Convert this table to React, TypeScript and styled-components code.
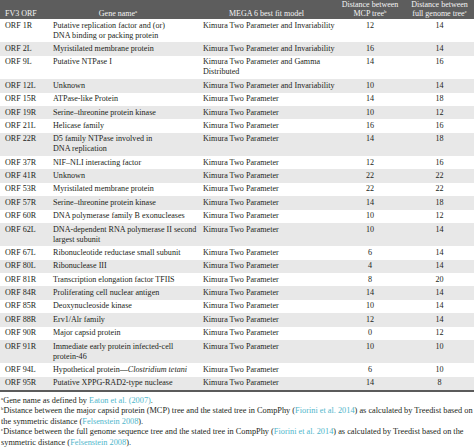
import React from "react";
import styled, { createGlobalStyle } from "styled-components";

const GlobalStyle = createGlobalStyle`
  html, body {
    margin: 0;
    padding: 0;
    background: #ffffff;
  }
  body {
    font-family: "Liberation Serif", "Times New Roman", serif;
  }
`;

const Page = styled.div`
  width: 474px;
  overflow: hidden;
  font-family: "Liberation Serif", "Times New Roman", serif;
  font-size: 8.1px;
  color: #231f20;
`;

const Table = styled.table`
  width: 474px;
  border-collapse: collapse;
  table-layout: fixed;
  border-bottom: 2px solid #5b5b5b;
`;

const HeadRow = styled.tr`
  background: #5d5d5d;
  color: #f4f4f4;
`;

const HeadCell = styled.th<{ $align?: "left" | "center"; $pr?: number }>`
  font-weight: normal;
  font-size: 8px;
  text-align: ${(p) => p.$align ?? "center"};
  vertical-align: bottom;
  line-height: 9px;
  height: 18px;
  padding: 0 ${(p) => p.$pr ?? 0}px 1px ${(p) => (p.$align === "left" ? 5 : 0)}px;
  white-space: nowrap;
`;

const Row = styled.tr<{ $shaded: boolean }>`
  background: ${(p) => (p.$shaded ? "#e8e8e8" : "#ffffff")};
`;

const Cell = styled.td<{ $align?: "left" | "center" }>`
  text-align: ${(p) => p.$align ?? "left"};
  vertical-align: top;
  line-height: 10px;
  white-space: nowrap;
  padding: 1.7px ${(p) => (p.$align === "center" ? 0 : 2)}px 1.7px
    ${(p) => (p.$align === "center" ? 0 : 5)}px;
`;

const Sup = styled.sup`
  font-size: 4.8px;
  vertical-align: 3px;
  line-height: 0;
`;

const Notes = styled.div`
  margin-top: 4px;
  padding-left: 1px;
  font-size: 8.3px;
  line-height: 10.4px;
`;

const NoteLine = styled.div`
  white-space: nowrap;
`;

const Ref = styled.span`
  color: #4fb6cb;
`;

type RowData = {
  orf: string;
  gene: React.ReactNode;
  model: React.ReactNode;
  mcp: number;
  full: number;
};

const KTP = "Kimura Two Parameter";
const KTPI = "Kimura Two Parameter and Invariability";

const rows: RowData[] = [
  { orf: "ORF 1R", gene: <>Putative replication factor and (or)<br />DNA binding or packing protein</>, model: KTPI, mcp: 12, full: 14 },
  { orf: "ORF 2L", gene: "Myristilated membrane protein", model: KTPI, mcp: 16, full: 14 },
  { orf: "ORF 9L", gene: "Putative NTPase I", model: <>Kimura Two Parameter and Gamma<br />Distributed</>, mcp: 14, full: 16 },
  { orf: "ORF 12L", gene: "Unknown", model: KTPI, mcp: 10, full: 14 },
  { orf: "ORF 15R", gene: "ATPase-like Protein", model: KTP, mcp: 14, full: 18 },
  { orf: "ORF 19R", gene: "Serine–threonine protein kinase", model: KTP, mcp: 10, full: 12 },
  { orf: "ORF 21L", gene: "Helicase family", model: KTP, mcp: 16, full: 16 },
  { orf: "ORF 22R", gene: <>D5 family NTPase involved in<br />DNA replication</>, model: KTP, mcp: 14, full: 18 },
  { orf: "ORF 37R", gene: "NIF–NLI interacting factor", model: KTP, mcp: 12, full: 16 },
  { orf: "ORF 41R", gene: "Unknown", model: KTP, mcp: 22, full: 22 },
  { orf: "ORF 53R", gene: "Myristilated membrane protein", model: KTP, mcp: 22, full: 22 },
  { orf: "ORF 57R", gene: "Serine–threonine protein kinase", model: KTP, mcp: 14, full: 18 },
  { orf: "ORF 60R", gene: "DNA polymerase family B exonucleases", model: KTP, mcp: 10, full: 12 },
  { orf: "ORF 62L", gene: <>DNA-dependent RNA polymerase II second<br />largest subunit</>, model: KTP, mcp: 10, full: 14 },
  { orf: "ORF 67L", gene: "Ribonucleotide reductase small subunit", model: KTP, mcp: 6, full: 14 },
  { orf: "ORF 80L", gene: "Ribonuclease III", model: KTP, mcp: 4, full: 14 },
  { orf: "ORF 81R", gene: "Transcription elongation factor TFIIS", model: KTP, mcp: 8, full: 20 },
  { orf: "ORF 84R", gene: "Proliferating cell nuclear antigen", model: KTP, mcp: 14, full: 14 },
  { orf: "ORF 85R", gene: "Deoxynucleoside kinase", model: KTP, mcp: 10, full: 14 },
  { orf: "ORF 88R", gene: "Erv1/Alr family", model: KTP, mcp: 12, full: 14 },
  { orf: "ORF 90R", gene: "Major capsid protein", model: KTP, mcp: 0, full: 12 },
  { orf: "ORF 91R", gene: <>Immediate early protein infected-cell<br />protein-46</>, model: KTP, mcp: 10, full: 10 },
  { orf: "ORF 94L", gene: <>Hypothetical protein—<i>Clostridium tetani</i></>, model: KTP, mcp: 6, full: 10 },
  { orf: "ORF 95R", gene: "Putative XPPG-RAD2-type nuclease", model: KTP, mcp: 14, full: 8 },
];

export default function App() {
  return (
    <>
      <GlobalStyle />
      <Page>
        <Table>
          <colgroup>
            <col style={{ width: 48 }} />
            <col style={{ width: 150 }} />
            <col style={{ width: 137 }} />
            <col style={{ width: 70 }} />
            <col style={{ width: 69 }} />
          </colgroup>
          <thead>
            <HeadRow>
              <HeadCell $align="left">FV3 ORF</HeadCell>
              <HeadCell $pr={10}>
                Gene name<Sup>a</Sup>
              </HeadCell>
              <HeadCell>MEGA 6 best fit model</HeadCell>
              <HeadCell>
                Distance between
                <br />
                MCP tree<Sup>b</Sup>
              </HeadCell>
              <HeadCell>
                Distance between
                <br />
                full genome tree<Sup>c</Sup>
              </HeadCell>
            </HeadRow>
          </thead>
          <tbody>
            {rows.map((r, i) => (
              <Row key={r.orf} $shaded={i % 2 === 1}>
                <Cell>{r.orf}</Cell>
                <Cell>{r.gene}</Cell>
                <Cell>{r.model}</Cell>
                <Cell $align="center">{r.mcp}</Cell>
                <Cell $align="center">{r.full}</Cell>
              </Row>
            ))}
          </tbody>
        </Table>
        <Notes>
          <NoteLine>
            <Sup>a</Sup>Gene name as defined by <Ref>Eaton et al. (2007)</Ref>.
          </NoteLine>
          <NoteLine>
            <Sup>b</Sup>Distance between the major capsid protein (MCP) tree and the stated tree in CompPhy (
            <Ref>Fiorini et al. 2014</Ref>) as calculated by Treedist based on
          </NoteLine>
          <NoteLine>
            the symmetric distance (<Ref>Felsenstein 2008</Ref>).
          </NoteLine>
          <NoteLine>
            <Sup>c</Sup>Distance between the full genome sequence tree and the stated tree in CompPhy (
            <Ref>Fiorini et al. 2014</Ref>) as calculated by Treedist based on the
          </NoteLine>
          <NoteLine>
            symmetric distance (<Ref>Felsenstein 2008</Ref>).
          </NoteLine>
        </Notes>
      </Page>
    </>
  );
}
